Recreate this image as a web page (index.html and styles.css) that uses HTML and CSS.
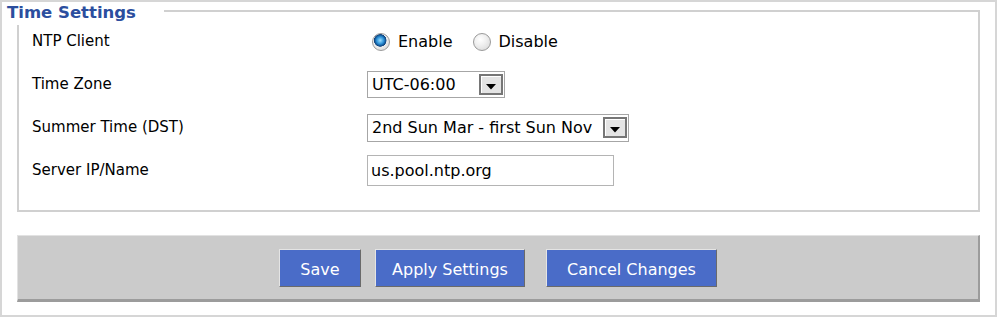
FILE: index.html
```html
<!DOCTYPE html>
<html>
<head>
<meta charset="utf-8">
<link rel="stylesheet" href="styles.css">
</head>
<body>
<div class="page">
  <div class="fieldset">
    <div class="legend">Time Settings</div>
    <div class="row">
      <div class="label">NTP Client</div>
      <div class="control">
        <span class="radio checked"></span><span class="radio-text">Enable</span>
        <span class="radio"></span><span class="radio-text">Disable</span>
      </div>
    </div>
    <div class="row">
      <div class="label">Time Zone</div>
      <div class="control">
        <div class="select select-tz"><span class="select-value">UTC-06:00</span><span class="select-btn"><svg width="10" height="6" viewBox="0 0 10 6"><path d="M0 0H10L5 5.5Z" fill="#000"/></svg></span></div>
      </div>
    </div>
    <div class="row">
      <div class="label">Summer Time (DST)</div>
      <div class="control">
        <div class="select select-dst"><span class="select-value">2nd Sun Mar - first Sun Nov</span><span class="select-btn"><svg width="10" height="6" viewBox="0 0 10 6"><path d="M0 0H10L5 5.5Z" fill="#000"/></svg></span></div>
      </div>
    </div>
    <div class="row">
      <div class="label">Server IP/Name</div>
      <div class="control">
        <div class="input">us.pool.ntp.org</div>
      </div>
    </div>
  </div>
  <div class="bar">
    <span class="btn btn-save">Save</span>
    <span class="btn btn-apply">Apply Settings</span>
    <span class="btn btn-cancel">Cancel Changes</span>
  </div>
</div>
</body>
</html>
```

FILE: styles.css
```css
html, body {
  margin: 0;
  padding: 0;
  background: #fff;
}
body {
  font-family: "DejaVu Sans", Verdana, sans-serif;
  font-size: 15px;
  color: #000;
}
.page {
  margin: 0 3px 0 0;
  border: 2px solid #d6d6d6;
  padding: 8px 15px 13px 15px;
}
.fieldset {
  position: relative;
  border: 2px solid #d0d0d0;
  padding: 8px 0 18px 13px;
}
.legend {
  position: absolute;
  left: -14px;
  top: -10px;
  padding: 0 28px 1px 2px;
  background: #fff;
  color: #2b4e9e;
  font-weight: bold;
  font-size: 16.5px;
  line-height: 22px;
}
.row {
  display: flex;
  align-items: center;
  height: 43px;
}
.label {
  width: 335px;
  flex: none;
  margin-top: -2px;
}
.control {
  display: flex;
  align-items: center;
  font-size: 16px;
}
.radio {
  width: 16px;
  height: 16px;
  border-radius: 50%;
  border: 1px solid #9a9a9a;
  background: radial-gradient(circle at 40% 35%, #ffffff 0%, #f0f0f0 40%, #d4d4d4 100%);
  margin-left: 5px;
  flex: none;
}
.radio.checked {
  background:
    radial-gradient(circle at 45% 40%, #9fe0ff 0%, #2a8fd6 28%, #0b3f7a 46%, transparent 50%),
    radial-gradient(circle at 40% 35%, #ffffff 0%, #eeeeee 50%, #cfcfcf 100%);
}
.radio-text {
  margin-left: 8px;
  margin-right: 15px;
}
.select {
  display: flex;
  align-items: center;
  border: 1px solid #a6a6a6;
  background: #fff;
  height: 25px;
  padding: 0 1px 0 4px;
}
.select-tz { width: 131px; }
.select-dst { width: 255px; height: 26px; }
.select-value {
  flex: 1;
  white-space: nowrap;
}
.select-btn {
  width: 24px;
  height: 21px;
  border: 2px solid #767676;
  background: #e4e4e4;
  box-shadow: inset 1px 1px 0 #fff;
  display: flex;
  align-items: flex-end;
  justify-content: center;
  padding-bottom: 3px;
  box-sizing: border-box;
  flex: none;
}
.input {
  width: 242px;
  height: 29px;
  border: 1px solid #b4b4b4;
  padding-left: 3px;
  display: flex;
  align-items: center;
  box-sizing: content-box;
}
.bar {
  margin-top: 23px;
  background: #cbcbcb;
  border-top: 1px solid #e2e2e2;
  border-left: 1px solid #e2e2e2;
  border-right: 2px solid #9c9c9c;
  border-bottom: 3px solid #9c9c9c;
  padding: 13px 0 12px;
  display: flex;
  justify-content: center;
  gap: 14px;
}
.btn {
  height: 34px;
  padding-top: 2px;
  line-height: 36px;
  background: #4a6cc8;
  color: #fff;
  font-size: 16px;
  border-top: 1px solid #e4e4e4;
  border-left: 1px solid #e4e4e4;
  border-right: 1px solid #6a6a6a;
  border-bottom: 1px solid #6a6a6a;
  text-align: center;
  overflow: hidden;
}
.btn-save { width: 80px; }
.btn-apply { width: 148px; }
.btn-cancel { width: 169px; margin-left: 7px; }
```
